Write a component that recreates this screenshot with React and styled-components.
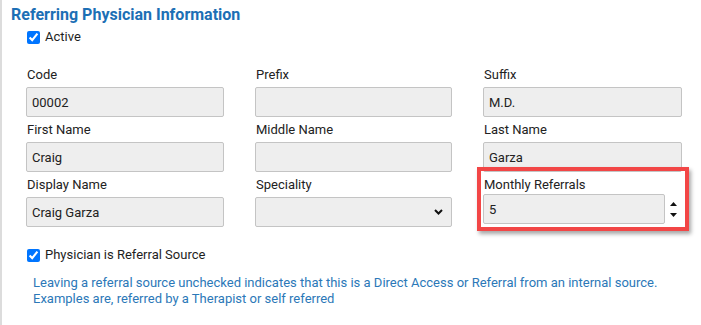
import React from "react";
import styled, { createGlobalStyle } from "styled-components";

const GlobalStyle = createGlobalStyle`
  html, body { margin: 0; padding: 0; background: #fff; }
  body { font-family: Roboto, "Liberation Sans", Arial, sans-serif; color: #222; }
  * { box-sizing: border-box; }
`;

const Page = styled.div`
  height: 325px;
  border-left: 2px solid #dcdcdc;
  padding: 5px 0 0 9px;
  overflow: hidden;
`;

const Title = styled.h2`
  margin: 0;
  font-size: 16px;
  line-height: 20px;
  font-weight: 700;
  color: #1c6fb5;
`;

const CheckRow = styled.label`
  display: flex;
  align-items: center;
  gap: 5px;
  height: 14px;
  margin: ${(p) => p.$mt || 0}px 0 0 16px;
  font-size: 13px;
  line-height: 14px;
  color: #1e1e1e;
`;

const Check = styled.input.attrs({ type: "checkbox" })`
  width: 13px;
  height: 13px;
  margin: 0;
  accent-color: #0075ff;
`;

const Grid = styled.div`
  display: grid;
  grid-template-columns: 198px 197px 199px;
  column-gap: 31px;
  row-gap: 5px;
  margin: 23px 0 0 15px;
`;

const Field = styled.div`
  position: relative;
  display: flex;
  flex-direction: column;
`;

const Label = styled.label`
  display: block;
  font-size: 13px;
  line-height: 16px;
  margin: 0 0 ${(p) => (p.$gap != null ? p.$gap : 4)}px 1px;
  color: #222;
`;

const Input = styled.input`
  width: ${(p) => p.$w || "100%"};
  height: 30px;
  margin: 0;
  padding: 0 5px;
  border: 1px solid #c4c4c4;
  border-radius: 2px;
  background: #eeeeee;
  font-family: inherit;
  font-size: 13px;
  color: #222;
  outline: none;
`;

const SelectBox = styled.div`
  position: relative;
  width: 100%;
  height: 30px;
  border: 1px solid #c4c4c4;
  border-radius: 2px;
  background: #eeeeee;
  display: flex;
  align-items: center;
  justify-content: flex-end;
  padding-right: 8px;
`;

const NumberRow = styled.div`
  display: flex;
  align-items: center;
`;

const Spinner = styled.div`
  width: 17px;
  height: 30px;
  display: flex;
  flex-direction: column;
  align-items: center;
  justify-content: center;
  gap: 7px;
`;

const Highlight = styled.div`
  position: absolute;
  left: -6px;
  top: -10px;
  width: 212px;
  height: 64px;
  border: 4px solid #f24646;
  box-shadow: 2px 3px 4px rgba(0, 0, 0, 0.35);
  pointer-events: none;
`;

const Help = styled.p`
  margin: 13px 0 0 22px;
  font-size: 13px;
  line-height: 16px;
  color: #2b78b8;
  width: 660px;
`;

const Chevron = () => (
  <svg width="9" height="6" viewBox="0 0 9 6">
    <path d="M1 1 L4.5 4.5 L8 1" fill="none" stroke="#111" strokeWidth="2" />
  </svg>
);

const Tri = ({ up }) => (
  <svg width="7" height="4" viewBox="0 0 7 4">
    <path d={up ? "M0 4 L3.5 0 L7 4 Z" : "M0 0 L3.5 4 L7 0 Z"} fill="#111" />
  </svg>
);

const TextField = ({ label, value }) => (
  <Field>
    <Label>{label}</Label>
    <Input defaultValue={value} readOnly />
  </Field>
);

export default function App() {
  return (
    <>
      <GlobalStyle />
      <Page>
        <Title>Referring Physician Information</Title>
        <CheckRow $mt={5}>
          <Check defaultChecked />
          Active
        </CheckRow>
        <Grid>
          <TextField label="Code" value="00002" />
          <TextField label="Prefix" value="" />
          <TextField label="Suffix" value="M.D." />
          <TextField label="First Name" value="Craig" />
          <TextField label="Middle Name" value="" />
          <TextField label="Last Name" value="Garza" />
          <TextField label="Display Name" value="Craig Garza" />
          <Field>
            <Label>Speciality</Label>
            <SelectBox>
              <Chevron />
            </SelectBox>
          </Field>
          <Field>
            <Label $gap={1}>Monthly Referrals</Label>
            <NumberRow>
              <Input $w="182px" defaultValue="5" readOnly />
              <Spinner>
                <Tri up />
                <Tri />
              </Spinner>
            </NumberRow>
            <Highlight />
          </Field>
        </Grid>
        <CheckRow $mt={21}>
          <Check defaultChecked />
          Physician is Referral Source
        </CheckRow>
        <Help>
          Leaving a referral source unchecked indicates that this is a Direct Access or Referral from an internal source.
          <br />
          Examples are, referred by a Therapist or self referred
        </Help>
      </Page>
    </>
  );
}
